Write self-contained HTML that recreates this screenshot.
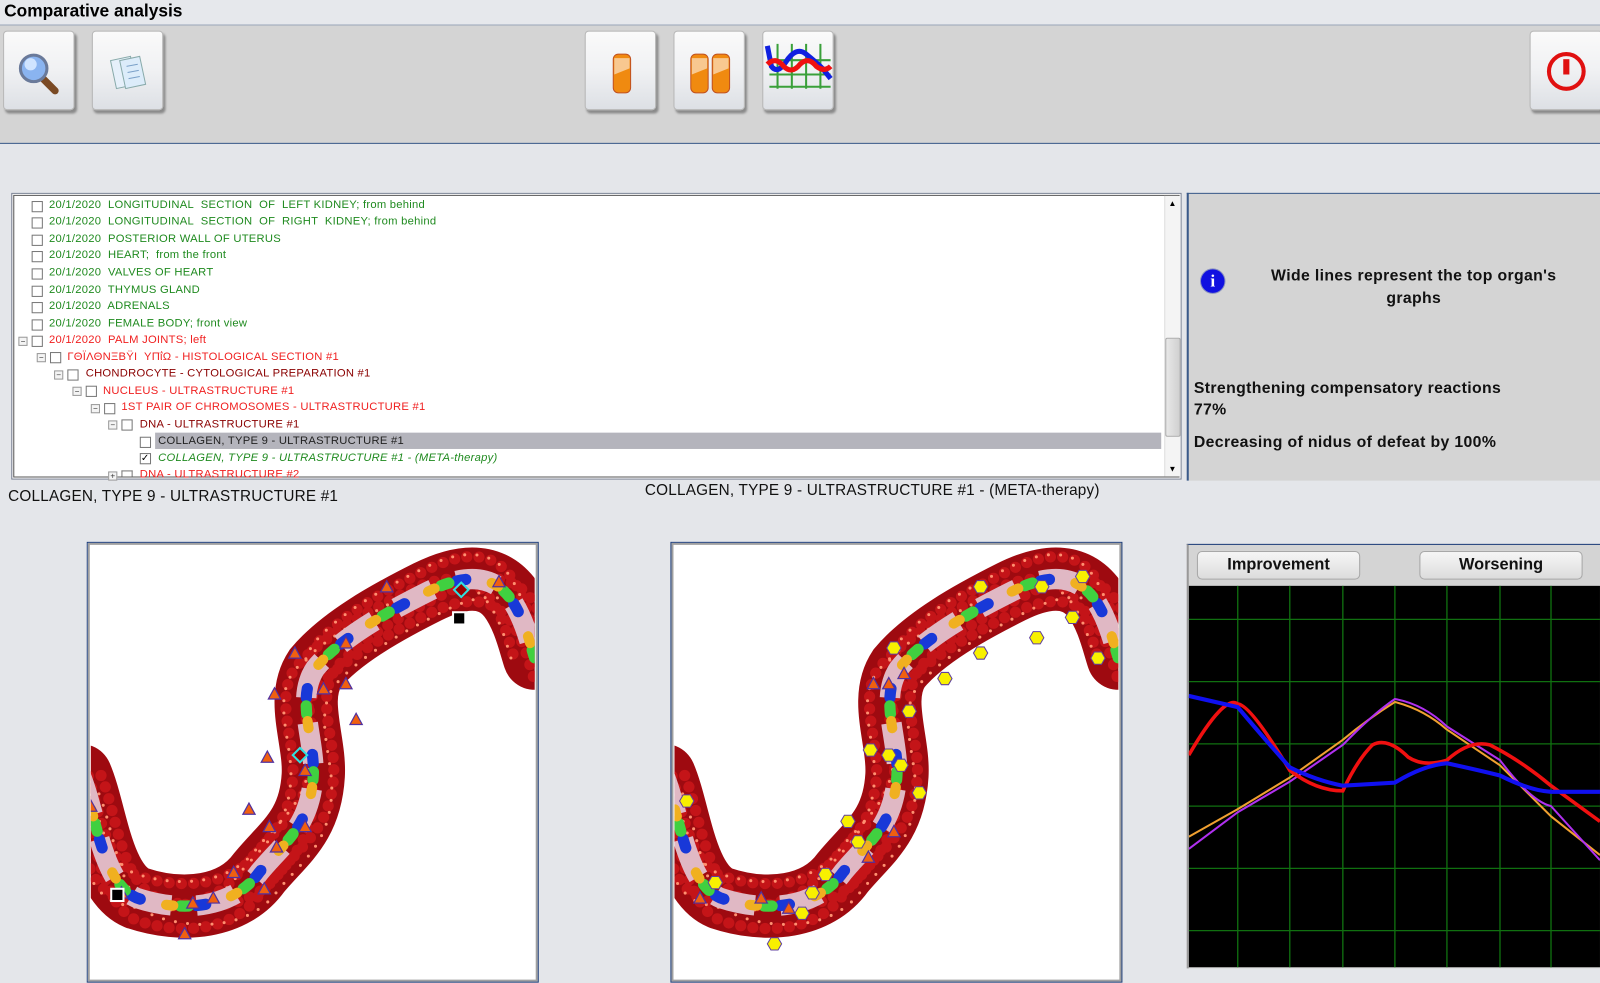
<!DOCTYPE html>
<html><head><meta charset="utf-8"><style>
html,body{margin:0;padding:0;width:1600px;height:967px;overflow:hidden;background:#e4e6ea;font-family:"Liberation Sans",sans-serif}
#w{position:absolute;left:0;top:0;width:1568px;height:948px;transform:scale(1.0204);transform-origin:0 0;background:#e4e6ea}
.a{position:absolute}
.btn{position:absolute;top:30px;width:70px;height:78px;border:1px solid #b8b8b8;border-radius:4px;background:linear-gradient(#fafafa,#f0f1f3 50%,#dde0e5);box-shadow:2px 3px 2px #8a8a8a;box-sizing:border-box}
.tree div{position:absolute;font-size:11px;white-space:nowrap;height:16px;line-height:16px;letter-spacing:0.25px}
.cb{position:absolute;width:9px;height:9px;border:1px solid #777;background:#fff}
.ex{position:absolute;width:7px;height:7px;border:1px solid #999;background:#f4f4f4;font-size:8px;line-height:7px;text-align:center;color:#333}
.g{color:#1f8a1f}.r{color:#f02020}.d{color:#8a0000}
.frame{position:absolute;top:531px;width:441px;height:430px;border:1px solid #1c3c78;background:#fff;box-shadow:inset 0 0 0 2px #a0a0a0}
.gb{position:absolute;top:540px;width:158px;height:26px;border:1px solid #a8a8a8;border-radius:5px;background:linear-gradient(#f6f6f6,#dcdcdc);font-weight:bold;font-size:16px;text-align:center;line-height:26px;color:#111}
.bt{font-weight:bold;font-size:15.5px;line-height:21px;color:#111;letter-spacing:0.35px}
</style></head><body><div id="w">
<div class="a" style="left:0;top:0;width:1568px;height:24px;background:#e6e8ec;border-bottom:1px solid #9aa6b8"></div>
<div class="a" style="left:4px;top:0;font-size:17px;font-weight:bold;line-height:22px">Comparative analysis</div>
<div class="a" style="left:0;top:25px;width:1568px;height:115px;background:#d4d4d4;border-bottom:1px solid #3a5a8a"></div>

<div class="btn" style="left:3px"><svg width="70" height="78" viewBox="0 0 70 78"><line x1="38" y1="46" x2="50" y2="58" stroke="#7a4a24" stroke-width="7" stroke-linecap="round"/><circle cx="29" cy="36" r="13" fill="#8ab4f0" stroke="#6a7a9a" stroke-width="3"/><circle cx="26" cy="32" r="6" fill="#d0e4ff"/></svg></div>
<div class="btn" style="left:90px"><svg width="70" height="78" viewBox="0 0 70 78"><rect x="20" y="26" width="20" height="28" fill="#e6f0fa" stroke="#8aa" transform="rotate(-12 30 40)"/><rect x="29" y="26" width="20" height="28" fill="#dcecfa" stroke="#8aa" transform="rotate(-12 39 40)"/><g stroke="#7aa0c8"><line x1="33" y1="34" x2="44" y2="32"/><line x1="34" y1="40" x2="45" y2="38"/><line x1="35" y1="46" x2="46" y2="44"/></g></svg></div>
<div class="btn" style="left:573px"><svg width="70" height="78" viewBox="0 0 70 78"><rect x="27" y="22" width="17" height="38" rx="5" fill="#f08a10" stroke="#c05020"/><path d="M28 26 h15 v10 l-15 6z" fill="#f8c890"/></svg></div>
<div class="btn" style="left:660px"><svg width="70" height="78" viewBox="0 0 70 78"><rect x="16" y="22" width="17" height="38" rx="5" fill="#f08a10" stroke="#c05020"/><path d="M17 26 h15 v10 l-15 6z" fill="#f8c890"/><rect x="37" y="22" width="17" height="38" rx="5" fill="#f08a10" stroke="#c05020"/><path d="M38 26 h15 v10 l-15 6z" fill="#f8c890"/></svg></div>
<div class="btn" style="left:747px"><svg width="70" height="78" viewBox="0 0 70 78"><g stroke="#3aa03a" stroke-width="2"><line x1="14" y1="12" x2="14" y2="56"/><line x1="28" y1="12" x2="28" y2="56"/><line x1="42" y1="12" x2="42" y2="56"/><line x1="56" y1="12" x2="56" y2="56"/><line x1="6" y1="28" x2="66" y2="28"/><line x1="6" y1="42" x2="66" y2="42"/><line x1="6" y1="54" x2="66" y2="54"/></g><path d="M4 14 L8 34 Q14 42 22 30 Q32 14 42 22 Q52 30 58 36 L66 46" stroke="#1020e0" stroke-width="5" fill="none"/><path d="M4 32 Q12 24 20 34 Q28 42 36 32 Q44 24 52 34 Q60 40 66 34" stroke="#f01010" stroke-width="5" fill="none"/></svg></div>
<div class="btn" style="left:1499px;width:72px"><svg width="70" height="78" viewBox="0 0 70 78"><circle cx="35" cy="39" r="17" fill="none" stroke="#e01010" stroke-width="4"/><rect x="32" y="27" width="6" height="15" fill="#e01010"/></svg></div>

<!-- tree -->
<div class="a tree" style="left:11px;top:189px;width:1145px;height:279px;background:#fff;border:1px solid #7a8294;box-shadow:inset 0 0 0 1px #fff,inset 0 0 0 2px #555">
<div style="left:1129px;top:2px;width:15px;height:275px;background:#f4f4f4;border-left:1px solid #ddd"></div>
<div style="left:1130px;top:141px;width:13px;height:95px;background:linear-gradient(90deg,#e8e8e8,#d0d0d0);border:1px solid #aaa;border-radius:2px"></div>
<div style="left:1133px;top:2px;font-size:8px">&#9650;</div>
<div style="left:1133px;top:262px;font-size:8px">&#9660;</div>
</div>
<div class="a tree" style="left:0;top:0">
<div style="left:152px;top:424px;width:986px;background:#b4b4bc"></div>
<span class="cb" style="left:31px;top:197px"></span><div class="g" style="left:48px;top:193px">20/1/2020&nbsp; LONGITUDINAL&nbsp; SECTION&nbsp; OF&nbsp; LEFT KIDNEY; from behind</div>
<span class="cb" style="left:31px;top:213px"></span><div class="g" style="left:48px;top:209px">20/1/2020&nbsp; LONGITUDINAL&nbsp; SECTION&nbsp; OF&nbsp; RIGHT&nbsp; KIDNEY; from behind</div>
<span class="cb" style="left:31px;top:230px"></span><div class="g" style="left:48px;top:226px">20/1/2020&nbsp; POSTERIOR WALL OF UTERUS</div>
<span class="cb" style="left:31px;top:246px"></span><div class="g" style="left:48px;top:242px">20/1/2020&nbsp; HEART;&nbsp; from the front</div>
<span class="cb" style="left:31px;top:263px"></span><div class="g" style="left:48px;top:259px">20/1/2020&nbsp; VALVES OF HEART</div>
<span class="cb" style="left:31px;top:280px"></span><div class="g" style="left:48px;top:276px">20/1/2020&nbsp; THYMUS GLAND</div>
<span class="cb" style="left:31px;top:296px"></span><div class="g" style="left:48px;top:292px">20/1/2020&nbsp; ADRENALS</div>
<span class="cb" style="left:31px;top:313px"></span><div class="g" style="left:48px;top:309px">20/1/2020&nbsp; FEMALE BODY; front view</div>
<span class="ex" style="left:18px;top:330px">−</span><span class="cb" style="left:31px;top:329px"></span><div class="r" style="left:48px;top:325px">20/1/2020&nbsp; PALM JOINTS; left</div>
<span class="ex" style="left:36px;top:346px">−</span><span class="cb" style="left:49px;top:345px"></span><div class="r" style="left:66px;top:342px">ΓΘΪΛΘΝΞΒΫΙ&nbsp; ΥΠΐΩ - HISTOLOGICAL SECTION #1</div>
<span class="ex" style="left:53px;top:363px">−</span><span class="cb" style="left:66px;top:362px"></span><div class="d" style="left:84px;top:358px">CHONDROCYTE - CYTOLOGICAL PREPARATION #1</div>
<span class="ex" style="left:71px;top:379px">−</span><span class="cb" style="left:84px;top:378px"></span><div class="r" style="left:101px;top:375px">NUCLEUS - ULTRASTRUCTURE #1</div>
<span class="ex" style="left:89px;top:396px">−</span><span class="cb" style="left:102px;top:395px"></span><div class="r" style="left:119px;top:391px">1ST PAIR OF CHROMOSOMES - ULTRASTRUCTURE #1</div>
<span class="ex" style="left:106px;top:412px">−</span><span class="cb" style="left:119px;top:411px"></span><div class="d" style="left:137px;top:408px">DNA - ULTRASTRUCTURE #1</div>
<span class="cb" style="left:137px;top:428px"></span><div style="left:155px;top:424px;color:#222">COLLAGEN, TYPE 9 - ULTRASTRUCTURE #1</div>
<span class="cb" style="left:137px;top:444px;font-size:10px;line-height:9px">✓</span><div class="g" style="left:155px;top:441px;font-style:italic">COLLAGEN, TYPE 9 - ULTRASTRUCTURE #1 - (META-therapy)</div>
<span class="ex" style="left:106px;top:462px">+</span><span class="cb" style="left:119px;top:461px;height:5px;border-bottom:none"></span><div class="r" style="left:137px;top:457px;height:11px;overflow:hidden">DNA - ULTRASTRUCTURE #2</div>
</div>

<!-- info panel -->
<div class="a" style="left:1163px;top:189px;width:405px;height:281px;background:#d4d4d4;border-top:1px solid #3a5a8a;border-left:2px solid #3a5a8a"></div>
<div class="a" style="left:1176px;top:263px;width:23px;height:23px;border-radius:50%;background:#1010e0;border:1px solid #8890c0;color:#fff;font-weight:bold;font-size:17px;text-align:center;line-height:23px;font-family:'Liberation Serif',serif">i</div>
<div class="a bt" style="left:1218px;top:260px;width:335px;text-align:center;line-height:22px">Wide lines represent the top organ's graphs</div>
<div class="a bt" style="left:1170px;top:370px">Strengthening compensatory reactions<br>77%</div>
<div class="a bt" style="left:1170px;top:423px">Decreasing of nidus of defeat by 100%</div>

<div class="a" style="left:8px;top:478px;font-size:15px;color:#111;letter-spacing:0.2px">COLLAGEN, TYPE 9 - ULTRASTRUCTURE #1</div>
<div class="a" style="left:632px;top:472px;font-size:15px;color:#111;letter-spacing:0.2px">COLLAGEN, TYPE 9 - ULTRASTRUCTURE #1 - (META-therapy)</div>

<!-- DNA frames -->
<svg width="0" height="0" style="position:absolute"><defs>
<path id="dp" d="M-10 225 C5 260 10 330 45 345 C90 360 140 355 165 320 C190 290 215 275 218 225 C220 190 200 150 220 120 C245 90 290 65 330 45 C360 30 390 25 410 50 C425 70 430 95 435 110" fill="none"/>
<g id="dna">
<use href="#dp" stroke="#9e0a10" stroke-width="62" stroke-linecap="round"/>
<use href="#dp" stroke="#c41418" stroke-width="11" stroke-dasharray="0 12" stroke-linecap="round" transform="translate(0,-22)"/>
<use href="#dp" stroke="#c41418" stroke-width="11" stroke-dasharray="0 12" stroke-linecap="round" transform="translate(0,22)"/>
<use href="#dp" stroke="#c41418" stroke-width="11" stroke-dasharray="0 12" stroke-linecap="round" transform="translate(-20,0)"/>
<use href="#dp" stroke="#c41418" stroke-width="11" stroke-dasharray="0 12" stroke-linecap="round" transform="translate(20,0)"/>
<use href="#dp" stroke="#ff9070" stroke-width="3" stroke-dasharray="0 12" stroke-linecap="round" transform="translate(-2,-24)"/>
<use href="#dp" stroke="#ff9070" stroke-width="3" stroke-dasharray="0 12" stroke-linecap="round" transform="translate(18,18)"/>
<use href="#dp" stroke="#ff9070" stroke-width="3" stroke-dasharray="0 12" stroke-linecap="round" transform="translate(-22,4)"/>
<use href="#dp" stroke="#e0b8c4" stroke-width="20" stroke-dasharray="40 25"/>
<use href="#dp" stroke="#1838d8" stroke-width="11" stroke-dasharray="9 56" stroke-linecap="round"/>
<use href="#dp" stroke="#40d040" stroke-width="11" stroke-dasharray="8 57" stroke-dashoffset="16" stroke-linecap="round"/>
<use href="#dp" stroke="#f0b020" stroke-width="10" stroke-dasharray="7 58" stroke-dashoffset="30" stroke-linecap="round"/>
</g>
<polygon id="tri" points="0,-6 6,5 -6,5" fill="#f06010" stroke="#5030a0" stroke-width="1.2"/>
<polygon id="hex" points="-7,0 -3.5,-6 3.5,-6 7,0 3.5,6 -3.5,6" fill="#f8f000" stroke="#6040a0" stroke-width="1"/>
</defs></svg>

<div class="frame" style="left:85px"><svg width="441" height="430" style="position:absolute;left:0;top:0"><svg x="3" y="3" width="435" height="427" overflow="hidden"><use href="#dna"/>
<use href="#tri" x="290" y="40"/><use href="#tri" x="400" y="35"/><use href="#tri" x="250" y="95"/><use href="#tri" x="200" y="105"/><use href="#tri" x="250" y="135"/><use href="#tri" x="180" y="145"/><use href="#tri" x="228" y="140"/><use href="#tri" x="260" y="170"/><use href="#tri" x="173" y="207"/><use href="#tri" x="210" y="220"/><use href="#tri" x="155" y="258"/><use href="#tri" x="175" y="275"/><use href="#tri" x="210" y="275"/><use href="#tri" x="182" y="295"/><use href="#tri" x="140" y="320"/><use href="#tri" x="120" y="345"/><use href="#tri" x="100" y="350"/><use href="#tri" x="170" y="336"/><use href="#tri" x="30" y="340"/><use href="#tri" x="92" y="380"/><use href="#tri" x="0" y="255"/>
<rect x="355" y="65" width="12" height="12" fill="#000" stroke="#fff" stroke-width="2"/><rect x="20" y="336" width="12" height="12" fill="#000" stroke="#fff" stroke-width="2"/>
<rect x="358" y="38" width="10" height="10" fill="#900" stroke="#30e0e0" stroke-width="2" transform="rotate(45 363 43)"/><rect x="200" y="200" width="10" height="10" fill="#900" stroke="#30e0e0" stroke-width="2" transform="rotate(45 205 205)"/>
</svg></svg></div>

<div class="frame" style="left:657px"><svg width="441" height="430" style="position:absolute;left:0;top:0"><svg x="3" y="3" width="435" height="427" overflow="hidden"><use href="#dna"/>
<use href="#hex" x="300" y="40"/><use href="#hex" x="360" y="40"/><use href="#hex" x="400" y="30"/><use href="#hex" x="390" y="70"/><use href="#hex" x="355" y="90"/><use href="#hex" x="300" y="105"/><use href="#hex" x="265" y="130"/><use href="#hex" x="230" y="162"/><use href="#hex" x="192" y="200"/><use href="#hex" x="210" y="205"/><use href="#hex" x="222" y="215"/><use href="#hex" x="240" y="242"/><use href="#hex" x="170" y="270"/><use href="#hex" x="180" y="290"/><use href="#hex" x="135" y="340"/><use href="#hex" x="125" y="360"/><use href="#hex" x="40" y="330"/><use href="#hex" x="12" y="250"/><use href="#hex" x="415" y="110"/><use href="#hex" x="148" y="322"/><use href="#hex" x="98" y="390"/><use href="#hex" x="215" y="100"/>
<use href="#tri" x="225" y="125"/><use href="#tri" x="210" y="135"/><use href="#tri" x="195" y="135"/><use href="#tri" x="215" y="280"/><use href="#tri" x="190" y="305"/><use href="#tri" x="25" y="345"/><use href="#tri" x="85" y="345"/><use href="#tri" x="112" y="355"/>
</svg></svg></div>

<!-- chart -->
<div class="a" style="left:1163px;top:533px;width:405px;height:415px;background:#d4d4d4;border-top:1px solid #1c3c78;border-left:2px solid #999"></div>
<div class="gb" style="left:1173px">Improvement</div>
<div class="gb" style="left:1391px">Worsening</div>
<svg class="a" style="left:1165px;top:574px" width="403" height="374" viewBox="1165 574 403 374">
<rect x="1165" y="574" width="403" height="374" fill="#000"/>
<g stroke="#107010" stroke-width="1.3">
<line x1="1213" y1="574" x2="1213" y2="948"/><line x1="1264" y1="574" x2="1264" y2="948"/><line x1="1316" y1="574" x2="1316" y2="948"/><line x1="1367" y1="574" x2="1367" y2="948"/><line x1="1418" y1="574" x2="1418" y2="948"/><line x1="1470" y1="574" x2="1470" y2="948"/><line x1="1520" y1="574" x2="1520" y2="948"/>
<line x1="1165" y1="607" x2="1568" y2="607"/><line x1="1165" y1="668" x2="1568" y2="668"/><line x1="1165" y1="729" x2="1568" y2="729"/><line x1="1165" y1="790" x2="1568" y2="790"/><line x1="1165" y1="851" x2="1568" y2="851"/><line x1="1165" y1="912" x2="1568" y2="912"/>
</g>
<path d="M1165 820 L1213 793 L1264 762 L1316 725 Q1340 705 1367 688 Q1395 695 1418 715 L1470 750 L1520 800 L1568 838" stroke="#f0a030" stroke-width="2" fill="none"/>
<path d="M1165 832 L1213 796 L1264 766 L1316 730 Q1345 700 1367 685 Q1395 690 1418 712 L1470 745 Q1500 785 1520 790 L1568 843" stroke="#b030f0" stroke-width="2" fill="none"/>
<path d="M1165 740 Q1200 680 1213 690 Q1225 690 1264 755 Q1290 775 1316 775 Q1330 745 1345 730 Q1360 722 1380 742 Q1395 752 1418 745 Q1440 725 1460 730 Q1490 745 1520 770 L1568 805" stroke="#f01010" stroke-width="3.5" fill="none"/>
<path d="M1165 682 L1213 693 Q1240 725 1264 752 Q1290 765 1316 770 L1367 767 Q1395 750 1418 748 Q1450 755 1470 760 Q1500 775 1520 776 L1568 776" stroke="#1010f0" stroke-width="4" fill="none"/>
</svg>
</div></body></html>
